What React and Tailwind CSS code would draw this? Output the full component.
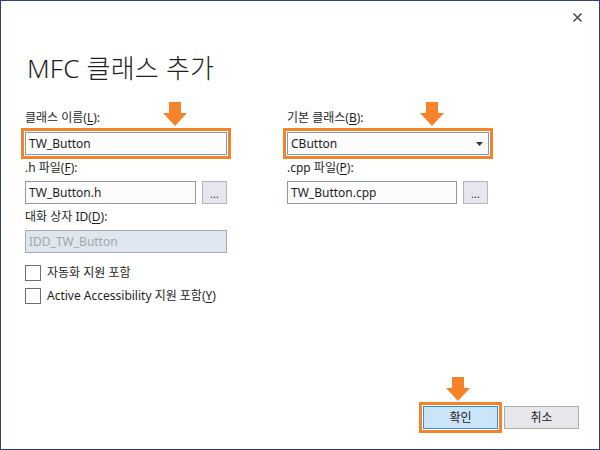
import React from "react";

const font = { fontFamily: '"Noto Sans", "Noto Sans CJK KR", sans-serif' };

function Arrow({ className }) {
  return (
    <svg className={className} width="24" height="25" viewBox="0 0 24 25">
      <polygon points="6,0 18,0 18,11 24,11 12,24 0,11 6,11" fill="#f5832a" />
    </svg>
  );
}

function Label({ children, u, rest = "):" }) {
  return (
    <div className="h-[18px] leading-[18px] text-[12px] text-[#1e1e1e] whitespace-nowrap">
      {children}(<span className="underline underline-offset-2">{u}</span>{rest}
    </div>
  );
}

function TextBox({ value, className = "" }) {
  return (
    <div
      className={`h-[23px] border border-[#8a99ad] bg-[#fcfcfc] px-[3px] leading-[21px] text-[12px] text-[#1e1e1e] ${className}`}
    >
      {value}
    </div>
  );
}

function Browse() {
  return (
    <div className="w-[25px] h-[23px] border border-[#b6b6bb] bg-[#e6e6ee] flex items-center justify-center text-[11px] text-[#333] leading-none pt-[2px]">
      ...
    </div>
  );
}

function Check({ children }) {
  return (
    <div className="flex items-center gap-[6px] h-[16px]">
      <div className="w-[16px] h-[16px] border border-[#6e6e6e] bg-white" />
      <span className="text-[12px] text-[#1e1e1e] leading-[16px] whitespace-nowrap">{children}</span>
    </div>
  );
}

export default function App() {
  return (
    <div
      style={font}
      className="w-[600px] h-[450px] bg-white border border-[#2e3f86] flex flex-col relative overflow-hidden"
    >
      <div className="flex justify-end pt-[11px] pr-[16px] h-[24px]">
        <svg width="11" height="11" viewBox="0 0 11 11">
          <path d="M1.5 1.5 L9.5 9.5 M9.5 1.5 L1.5 9.5" stroke="#4a4a4a" strokeWidth="1.6" />
        </svg>
      </div>
      <div className="pl-[26px] mt-[26px] text-[26px] font-light text-[#1e1e1e] leading-[34px] tracking-[0.2px]">
        MFC 클래스 추가
      </div>

      <div className="flex mt-[24px] pl-[24px]">
        {/* left column */}
        <div className="w-[202px] flex flex-col">
          <div className="relative">
            <Label u="L">클래스 이름</Label>
            <Arrow className="absolute left-[138px] top-[-7px]" />
          </div>
          <div className="mt-[5px] outline-[3px] outline outline-[#f5832a] outline-offset-[1px]">
            <TextBox value="TW_Button" />
          </div>
          <div className="mt-[4px]">
            <Label u="F">.h 파일</Label>
          </div>
          <div className="mt-[4px] flex gap-[6px]">
            <TextBox value="TW_Button.h" className="w-[171px]" />
            <Browse />
          </div>
          <div className="mt-[4px]">
            <Label u="D">대화 상자 ID</Label>
          </div>
          <div className="mt-[4px]">
            <div className="h-[23px] border border-[#a4acb8] bg-[#dfe6f0] px-[3px] leading-[21px] text-[12px] text-[#a2a6ad]">
              IDD_TW_Button
            </div>
          </div>
          <div className="mt-[12px] flex flex-col gap-[7px]">
            <Check>자동화 지원 포함</Check>
            <Check>
              Active Accessibility 지원 포함(<span className="underline underline-offset-2">Y</span>)
            </Check>
          </div>
        </div>

        {/* right column */}
        <div className="w-[202px] ml-[60px] flex flex-col">
          <div className="relative">
            <Label u="B">기본 클래스</Label>
            <Arrow className="absolute left-[133px] top-[-7px]" />
          </div>
          <div className="mt-[5px] outline-[3px] outline outline-[#f5832a] outline-offset-[1px]">
            <div className="h-[23px] border border-[#8a99ad] bg-[#fcfcfc] pl-[3px] pr-[5px] flex items-center justify-between text-[12px] text-[#1e1e1e]">
              <span className="leading-[21px]">CButton</span>
              <svg width="7" height="4" viewBox="0 0 7 4">
                <polygon points="0,0 7,0 3.5,4" fill="#333" />
              </svg>
            </div>
          </div>
          <div className="mt-[4px]">
            <Label u="P">.cpp 파일</Label>
          </div>
          <div className="mt-[4px] flex gap-[6px]">
            <TextBox value="TW_Button.cpp" className="w-[170px]" />
            <Browse />
          </div>
        </div>
      </div>

      <div className="mt-auto flex justify-end gap-[6px] pr-[20px] pb-[20px]">
        <div className="relative">
          <Arrow className="absolute left-[23px] top-[-29px]" />
          <div className="w-[75px] h-[23px] border border-[#2f8fe0] bg-[#cce4f7] outline-[3px] outline outline-[#f5832a] outline-offset-[1px] flex items-center justify-center text-[12px] text-[#1e1e1e]">
            확인
          </div>
        </div>
        <div className="w-[75px] h-[23px] border border-[#adadad] bg-[#e8e8ec] flex items-center justify-center text-[12px] text-[#1e1e1e]">
          취소
        </div>
      </div>
    </div>
  );
}
